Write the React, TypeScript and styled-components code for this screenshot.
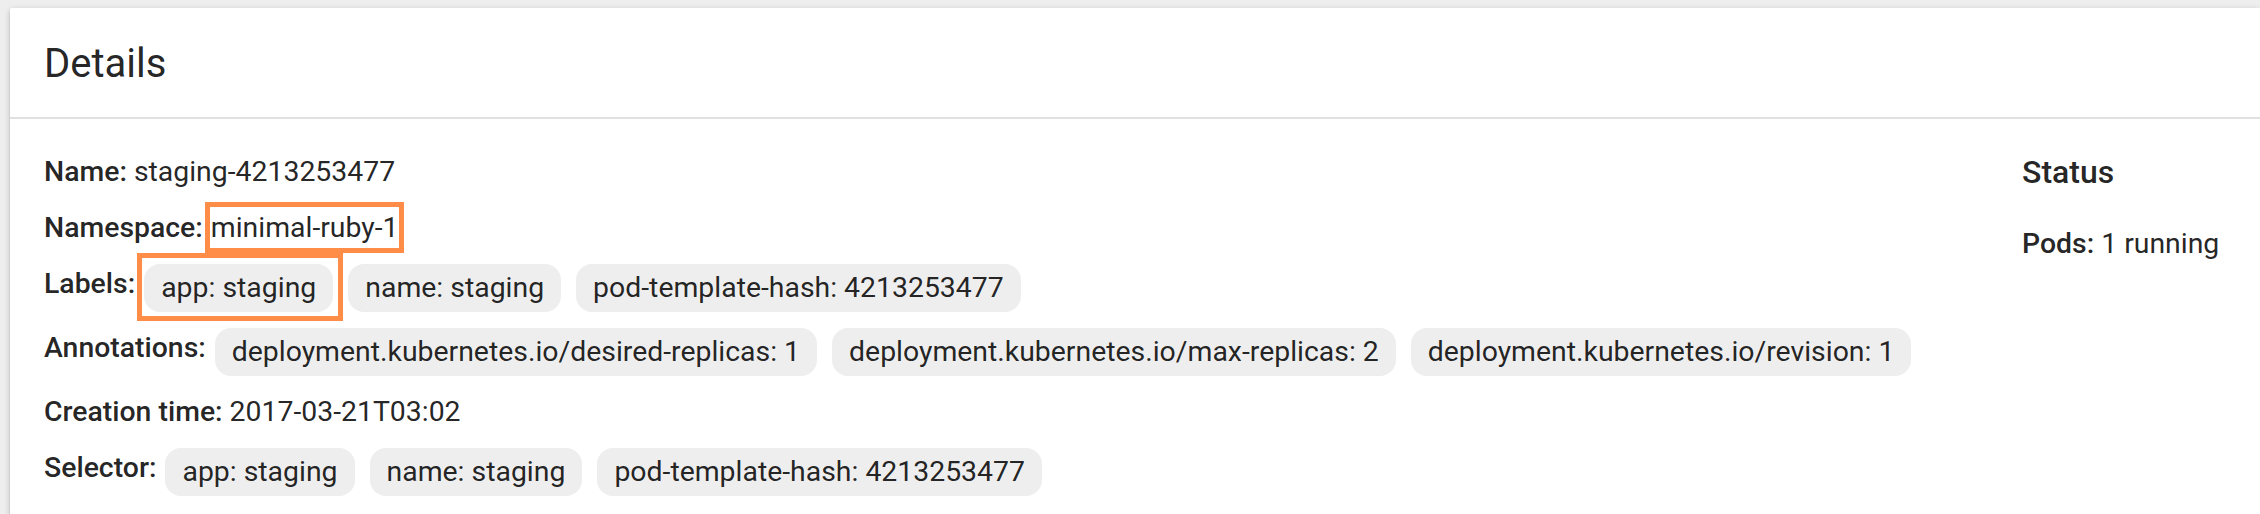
import styled, { createGlobalStyle } from 'styled-components';

const GlobalStyle = createGlobalStyle`
  html, body {
    margin: 0;
    padding: 0;
    height: 514px;
    overflow: hidden;
    background: #eeeeee;
    font-family: Roboto, "Noto Sans", "Liberation Sans", sans-serif;
    color: rgba(0, 0, 0, 0.87);
  }
`;

const Page = styled.div`
  padding: 8px 0 0 10px;
`;

const Card = styled.section`
  background: #ffffff;
  border-radius: 2px 0 0 0;
  box-shadow: 0 2px 6px rgba(0, 0, 0, 0.2), 0 2px 2px rgba(0, 0, 0, 0.14),
    0 4px 2px -2px rgba(0, 0, 0, 0.12);
`;

const Header = styled.header`
  height: 111px;
  padding: 2px 34px 0;
  box-sizing: border-box;
  display: flex;
  align-items: center;
  border-bottom: 2px solid #e0e0e0;
`;

const Title = styled.h2`
  margin: 0;
  font-size: 40px;
  font-weight: 400;
  line-height: 48px;
`;

const Body = styled.div`
  display: flex;
  justify-content: space-between;
  padding: 33px 34px 40px;
`;

const Column = styled.div`
  display: flex;
  flex-direction: column;
  gap: 16px;
`;

const StatusColumn = styled.div`
  width: 204px;
  display: flex;
  flex-direction: column;
  gap: 32px;
`;

const Entry = styled.div`
  display: flex;
  align-items: flex-start;
  font-size: 28.4px;
  line-height: 40px;
  white-space: nowrap;
`;

const Key = styled.span<{ $chips?: boolean }>`
  font-weight: 500;
  margin-right: ${({ $chips }) => ($chips ? '9px' : '7px')};
`;

const Value = styled.span``;

// orange highlight drawn over the value
const Marked = styled.span`
  position: relative;
  padding-left: 1px;

  &::after {
    content: '';
    position: absolute;
    top: -6px;
    bottom: -5px;
    left: -5px;
    right: -5px;
    border: 5px solid #ff8c47;
    pointer-events: none;
  }
`;

const ChipList = styled.div`
  display: flex;
  flex-wrap: wrap;
  gap: 15px;
`;

const Chip = styled.span<{ $marked?: boolean }>`
  position: relative;
  display: inline-block;
  height: 48px;
  line-height: 48px;
  padding: 0 17px;
  border-radius: 16px;
  background: #eeeeee;
  color: rgba(0, 0, 0, 0.87);

  &::after {
    content: '';
    display: ${({ $marked }) => ($marked ? 'block' : 'none')};
    position: absolute;
    top: -11px;
    bottom: -9px;
    left: -7px;
    right: -10px;
    border: 5px solid #ff8c47;
    pointer-events: none;
  }
`;

const StatusTitle = styled.div`
  font-size: 32px;
  font-weight: 500;
  line-height: 40px;
`;

const labels = ['app: staging', 'name: staging', 'pod-template-hash: 4213253477'];

const annotations = [
  'deployment.kubernetes.io/desired-replicas: 1',
  'deployment.kubernetes.io/max-replicas: 2',
  'deployment.kubernetes.io/revision: 1',
];

const ChipEntry = ({ name, items, marked }: { name: string; items: string[]; marked?: number }) => (
  <Entry>
    <Key $chips>{name}:</Key>
    <ChipList>
      {items.map((item, i) => (
        <Chip key={item} $marked={marked === i}>
          {item}
        </Chip>
      ))}
    </ChipList>
  </Entry>
);

export default function App() {
  return (
    <Page>
      <GlobalStyle />
      <Card>
        <Header>
          <Title>Details</Title>
        </Header>
        <Body>
          <Column>
            <Entry>
              <Key>Name:</Key>
              <Value>staging-4213253477</Value>
            </Entry>
            <Entry>
              <Key>Namespace:</Key>
              <Marked>minimal-ruby-1</Marked>
            </Entry>
            <ChipEntry name="Labels" items={labels} marked={0} />
            <ChipEntry name="Annotations" items={annotations} />
            <Entry>
              <Key>Creation time:</Key>
              <Value>2017-03-21T03:02</Value>
            </Entry>
            <ChipEntry name="Selector" items={labels} />
          </Column>
          <StatusColumn>
            <StatusTitle>Status</StatusTitle>
            <Entry>
              <Key>Pods:</Key>
              <Value>1 running</Value>
            </Entry>
          </StatusColumn>
        </Body>
      </Card>
    </Page>
  );
}
